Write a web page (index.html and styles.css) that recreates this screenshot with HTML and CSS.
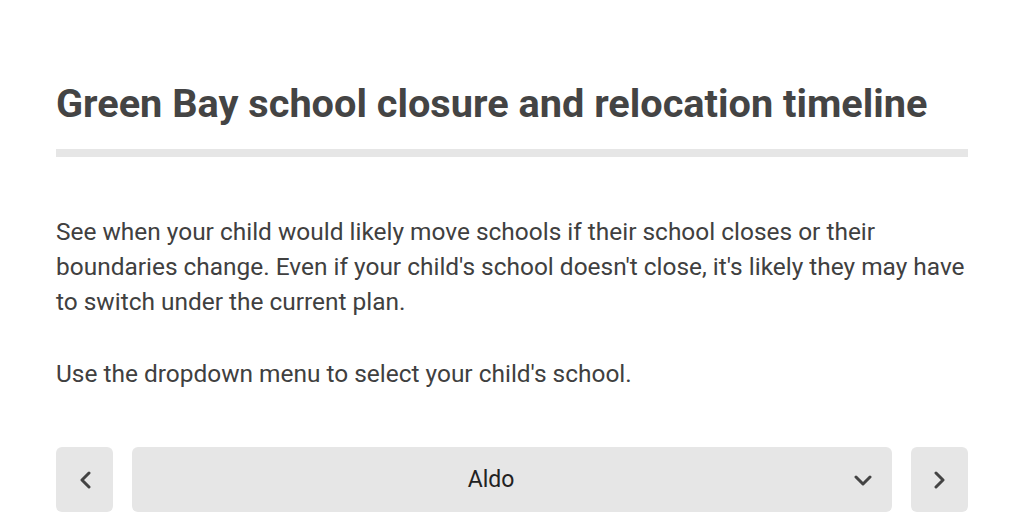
FILE: index.html
```html
<!DOCTYPE html>
<html lang="en">
<head>
<meta charset="utf-8">
<title>Green Bay school closure and relocation timeline</title>
<link rel="stylesheet" href="styles.css">
</head>
<body>
<main class="page">
  <h1 class="title">Green Bay school closure and relocation timeline</h1>
  <div class="rule"></div>
  <p class="intro">See when your child would likely move schools if their school closes or their boundaries change. Even if your child's school doesn't close, it's likely they may have to switch under the current plan.</p>
  <p class="intro">Use the dropdown menu to select your child's school.</p>
  <div class="picker">
    <button class="nav-btn" aria-label="Previous school">
      <svg width="12" height="18" viewBox="0 0 12 18"><path d="M10 2 L3 9 L10 16" fill="none" stroke="#444" stroke-width="3" stroke-linecap="round" stroke-linejoin="round"/></svg>
    </button>
    <div class="select">
      <span class="select-label">Aldo</span>
      <svg class="caret" width="18" height="12" viewBox="0 0 18 12"><path d="M2 2 L9 9 L16 2" fill="none" stroke="#444" stroke-width="3" stroke-linecap="round" stroke-linejoin="round"/></svg>
    </div>
    <button class="nav-btn" aria-label="Next school">
      <svg width="12" height="18" viewBox="0 0 12 18"><path d="M2 2 L9 9 L2 16" fill="none" stroke="#444" stroke-width="3" stroke-linecap="round" stroke-linejoin="round"/></svg>
    </button>
  </div>
</main>
</body>
</html>
```

FILE: styles.css
```css
html, body {
  margin: 0;
  padding: 0;
  background: #fff;
}
body {
  font-family: Roboto, "Liberation Sans", Arial, sans-serif;
  color: #444;
}
.page {
  padding: 76px 56px 0;
}
.title {
  margin: 0;
  font-size: 39.7px;
  line-height: 56px;
  font-weight: 700;
  color: #444;
}
.rule {
  height: 8px;
  background: #e6e6e6;
  margin-top: 17px;
}
.intro {
  margin: 57px 0 0;
  font-size: 24.45px;
  line-height: 35px;
  color: #404040;
}
.intro + .intro {
  margin-top: 37px;
}
.picker {
  display: flex;
  gap: 19px;
  margin-top: 56px;
}
.nav-btn {
  width: 57px;
  height: 65px;
  border: none;
  border-radius: 6px;
  background: #e6e6e6;
  display: flex;
  align-items: center;
  justify-content: center;
  padding: 0;
}
.select {
  flex: 1;
  height: 65px;
  border-radius: 6px;
  background: #e6e6e6;
  display: flex;
  align-items: center;
  justify-content: center;
  padding-right: 42px;
  position: relative;
}
.select-label {
  font-size: 23px;
  color: #222;
}
.caret {
  position: absolute;
  right: 20px;
  top: 50%;
  margin-top: -5px;
}
```
